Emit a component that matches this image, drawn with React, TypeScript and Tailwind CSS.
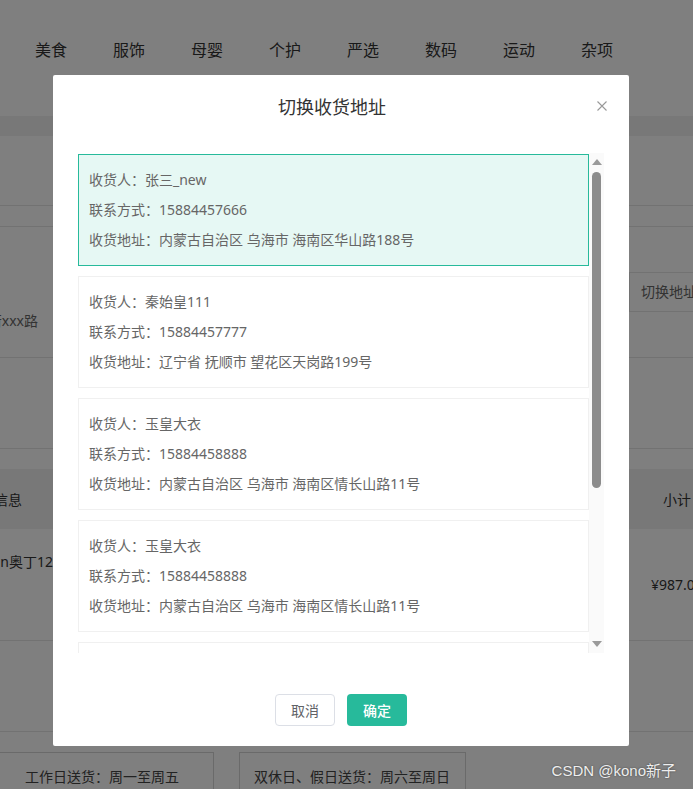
import React, { useState } from 'react';

interface Address {
    name: string;
    phone: string;
    address: string;
}

const navItems = ['美食', '服饰', '母婴', '个护', '严选', '数码', '运动', '杂项'];

const addresses: Address[] = [
    { name: '张三_new', phone: '15884457666', address: '内蒙古自治区 乌海市 海南区华山路188号' },
    { name: '秦始皇111', phone: '15884457777', address: '辽宁省 抚顺市 望花区天岗路199号' },
    { name: '玉皇大衣', phone: '15884458888', address: '内蒙古自治区 乌海市 海南区情长山路11号' },
    { name: '玉皇大衣', phone: '15884458888', address: '内蒙古自治区 乌海市 海南区情长山路11号' },
    { name: '李四', phone: '15884459999', address: '北京市 北京市 朝阳区建国路66号' },
];

const Page: React.FC = () => {
    return (
        <div className="w-[693px] text-[#333]">
            <div className="h-[116px] flex pl-[35px] pt-[39px]">
                {navItems.map((item) => (
                    <div key={item} className="w-[78px] text-[16px] leading-[22px]">{item}</div>
                ))}
            </div>
            <div className="h-[20px] bg-[#f0f0f0]"></div>
            <div className="h-[70px] border-b border-[#e4e4e4]"></div>
            <div className="h-[21px] border-b border-[#e4e4e4]"></div>
            <div className="h-[131px] border-b border-[#e4e4e4] flex text-[14px] text-[#666]">
                <div className="w-[38px] flex justify-end whitespace-nowrap mt-[84px] leading-[20px] shrink-0">朝阳区某某街xxx路</div>
                <div className="ml-[591px] mt-[45px] h-[40px] w-[80px] shrink-0 border border-[#e4e4e4] pl-[11px] leading-[38px] whitespace-nowrap">切换地址</div>
            </div>
            <div className="h-[91px] border-b border-[#e4e4e4]"></div>
            <div className="h-[20px]"></div>
            <div className="h-[60px] bg-[#f0f0f0] flex items-center text-[14px]">
                <div className="w-[22px] flex justify-end whitespace-nowrap shrink-0">商品信息</div>
                <div className="ml-[641px] shrink-0 whitespace-nowrap">小计</div>
            </div>
            <div className="h-[112px] border-b border-[#e4e4e4] flex text-[14px]">
                <div className="w-[53px] flex justify-end whitespace-nowrap mt-[23px] leading-[20px] shrink-0">Kevin奥丁12</div>
                <div className="ml-[598px] self-center shrink-0 whitespace-nowrap">¥987.00</div>
            </div>
            <div className="h-[91px] border-b border-[#e4e4e4]"></div>
            <div className="flex mt-[20px] ml-[-1px] text-[14px] text-[#444]">
                <div className="w-[215px] h-[60px] border border-[#d4d4d4] pl-[25px] pt-[14px] leading-[20px] whitespace-nowrap">工作日送货：周一至周五</div>
                <div className="w-[227px] h-[60px] ml-[25px] border border-[#d4d4d4] pl-[14px] pt-[14px] leading-[20px] whitespace-nowrap">双休日、假日送货：周六至周日</div>
            </div>
        </div>
    );
};

const AddressCard: React.FC<{ item: Address; active: boolean; onClick: () => void }> = ({ item, active, onClick }) => {
    return (
        <div
            onClick={onClick}
            className={
                active
                    ? 'shrink-0 h-[112px] border border-[#27ba9b] bg-[#e6f8f4] px-[10px] py-[10px] cursor-pointer'
                    : 'shrink-0 h-[112px] border border-[#f0f0f0] bg-white px-[10px] py-[10px] cursor-pointer'
            }
        >
            <div className="leading-[30px]">收货人：{item.name}</div>
            <div className="leading-[30px]">联系方式：{item.phone}</div>
            <div className="leading-[30px]">收货地址：{item.address}</div>
        </div>
    );
};

const App: React.FC = () => {
    const [active, setActive] = useState(0);

    return (
        <div className="relative w-[693px] h-[789px] overflow-hidden bg-white font-['Noto_Sans','Noto_Sans_CJK_SC',sans-serif]">
            <Page />
            <div className="absolute inset-0 bg-black/50">
                <div className="relative ml-[53px] mt-[75px] w-[576px] bg-white rounded-[2px] px-[25px] pt-[20px] pb-[20px]">
                    <h2 className="text-center text-[18px] leading-[24px] text-[#333] pr-[18px]">切换收货地址</h2>
                    <button className="absolute right-[22px] top-[26px] w-[10px] h-[10px] text-[#999]">
                        <svg viewBox="0 0 10 10" className="w-[10px] h-[10px]" fill="none" stroke="currentColor" strokeWidth="1.1">
                            <path d="M0.5 0.5 L9.5 9.5 M9.5 0.5 L0.5 9.5" />
                        </svg>
                    </button>
                    <div className="mt-[34px] h-[500px] flex text-[14px] text-[#666]">
                        <div className="w-[511px] h-[500px] overflow-hidden flex flex-col gap-[10px] pt-px">
                            {addresses.map((item, i) => (
                                <AddressCard key={i} item={item} active={i === active} onClick={() => setActive(i)} />
                            ))}
                        </div>
                        <div className="w-[15px] h-[500px] bg-[#fafafa] flex flex-col items-center">
                            <div className="h-[18px] flex items-center justify-center">
                                <div className="w-0 h-0 border-l-[5px] border-r-[5px] border-b-[6px] border-l-transparent border-r-transparent border-b-[#9a9a9a]"></div>
                            </div>
                            <div className="mt-[1px] w-[9px] h-[316px] rounded-full bg-[#8c8c8c]"></div>
                            <div className="flex-1"></div>
                            <div className="h-[18px] flex items-center justify-center">
                                <div className="w-0 h-0 border-l-[5px] border-r-[5px] border-t-[6px] border-l-transparent border-r-transparent border-t-[#9a9a9a]"></div>
                            </div>
                        </div>
                    </div>
                    <div className="mt-[41px] flex justify-center gap-[12px] text-[14px]">
                        <button className="w-[60px] h-[32px] border border-[#dcdfe6] rounded-[4px] text-[#606266] bg-white">取消</button>
                        <button className="w-[60px] h-[32px] rounded-[4px] bg-[#27ba9b] text-white font-medium">确定</button>
                    </div>
                </div>
            </div>
            <div className="absolute right-[17px] bottom-[7px] text-[15px] text-[#eeeeee] font-['Liberation_Sans','Noto_Sans_CJK_SC',sans-serif] [text-shadow:0_0_2px_rgba(0,0,0,0.5)]">
                CSDN @kono新子
            </div>
        </div>
    );
};

export default App;
